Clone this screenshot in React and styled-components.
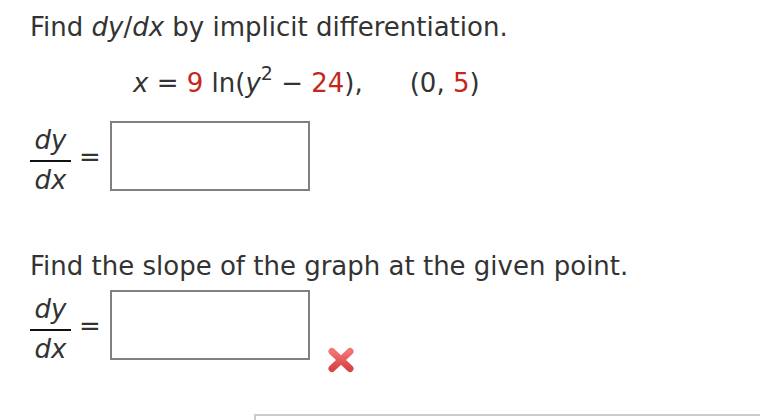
import React from 'react';
import styled, { createGlobalStyle } from 'styled-components';

const GlobalStyle = createGlobalStyle`
  body {
    margin: 0;
    background: #fff;
    font-family: "DejaVu Sans", Verdana, sans-serif;
    color: #333;
  }
`

const Page = styled.div`
  padding: 12px 0 0 30px;
  height: 420px;
  box-sizing: border-box;
  overflow: hidden;
`

const Prompt = styled.p`
  font-size: 26px;
  line-height: 30px;
  margin: ${p => p.$top || 0}px 0 0;
`

const Equation = styled.div`
  font-size: 26px;
  line-height: 30px;
  margin: 26px 0 0 103px;
  white-space: pre;
  sup {
    font-size: 19px;
    line-height: 0;
    vertical-align: 12px;
  }
`

const Red = styled.span`
  color: #c4271c;
`

const Gap = styled.span`
  display: inline-block;
  width: 47px;
`

const AnswerRow = styled.div`
  display: flex;
  align-items: center;
  margin-top: ${p => p.$top}px;
`

const Fraction = styled.div`
  display: inline-flex;
  flex-direction: column;
  align-items: center;
  width: 41px;
  font-size: 26px;
  font-style: italic;
  line-height: 26px;
  transform: translateY(4px);
  span { display: block; }
  hr {
    width: 100%;
    height: 2px;
    margin: 7px 0 5px;
    border: 0;
    background: #111;
  }
`

const Equals = styled.span`
  font-size: 26px;
  line-height: 30px;
  margin: 0 9px 0 8px;
  position: relative;
  top: 1px;
`

const AnswerBox = styled.div`
  width: 196px;
  height: 66px;
  border: 2px solid #808080;
`

const Wrong = styled.svg`
  align-self: flex-end;
  margin: 0 0 -13px 17px;
`

const Footer = styled.div`
  margin: 54px 0 0 224px;
  height: 30px;
  border-top: 2px solid #ccc;
  border-left: 2px solid #ccc;
`

function Dydx() {
  return (
    <Fraction>
      <span>dy</span>
      <hr />
      <span>dx</span>
    </Fraction>
  );
}

export default function App() {
  return (
    <>
      <GlobalStyle />
      <Page>
        <Prompt>Find <i>dy</i>/<i>dx</i> by implicit differentiation.</Prompt>
        <Equation>
          <i>x</i> = <Red>9</Red> ln(<i>y</i><sup>2</sup> − <Red>24</Red>),<Gap />(0, <Red>5</Red>)
        </Equation>
        <AnswerRow $top={23}>
          <Dydx />
          <Equals>=</Equals>
          <AnswerBox />
        </AnswerRow>
        <Prompt $top={60}>Find the slope of the graph at the given point.</Prompt>
        <AnswerRow $top={9}>
          <Dydx />
          <Equals>=</Equals>
          <AnswerBox />
          <Wrong width="28" height="26" viewBox="0 0 28 26">
            <defs>
              <linearGradient id="xg" x1="0" y1="0" x2="0" y2="1">
                <stop offset="0" stopColor="#f07474" />
                <stop offset="1" stopColor="#d94444" />
              </linearGradient>
            </defs>
            <path d="M5 4.5 L23 21.5 M23 4.5 L5 21.5" stroke="url(#xg)" strokeWidth="7" strokeLinecap="round" fill="none" />
          </Wrong>
        </AnswerRow>
        <Footer />
      </Page>
    </>
  );
}
